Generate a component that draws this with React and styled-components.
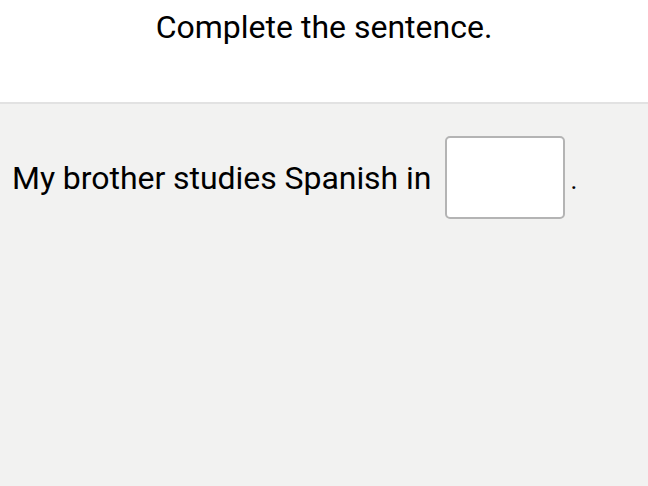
import React from "react";
import styled, { createGlobalStyle } from "styled-components";

const GlobalStyle = createGlobalStyle`
  html, body {
    margin: 0;
    padding: 0;
    height: 100%;
    background: #f2f2f1;
    font-family: Roboto, "Liberation Sans", sans-serif;
  }
  #root {
    min-height: 100%;
  }
`;

const Page = styled.div`
  width: 648px;
  height: 486px;
  display: flex;
  flex-direction: column;
  overflow: hidden;
`;

const Header = styled.div`
  height: 102px;
  background: #ffffff;
  border-bottom: 2px solid #e2e2e2;
  display: flex;
  justify-content: center;
  align-items: flex-start;
`;

const Title = styled.h1`
  margin: 7px 0 0;
  font-size: 32px;
  font-weight: 400;
  color: #000;
  line-height: 40px;
`;

const Body = styled.div`
  flex: 1;
  background: #f2f2f1;
  padding: 32px 12px 0;
`;

const Sentence = styled.div`
  display: flex;
  align-items: center;
  font-size: 32px;
  letter-spacing: -0.05px;
  color: #000;
`;

const Blank = styled.input`
  width: 116px;
  height: 79px;
  margin-left: 14px;
  border: 2px solid #b4b4b4;
  border-radius: 5px;
  background: #fff;
  box-sizing: content-box;
  padding: 0;
  outline: none;
  font: inherit;
`;

const Dot = styled.span`
  margin-left: 5px;
  font-size: 26px;
  transform: translateY(2px);
`;

export default function App() {
  return (
    <Page>
      <GlobalStyle />
      <Header>
        <Title>Complete the sentence.</Title>
      </Header>
      <Body>
        <Sentence>
          <span>My brother studies Spanish in</span>
          <Blank type="text" aria-label="answer" />
          <Dot>.</Dot>
        </Sentence>
      </Body>
    </Page>
  );
}
